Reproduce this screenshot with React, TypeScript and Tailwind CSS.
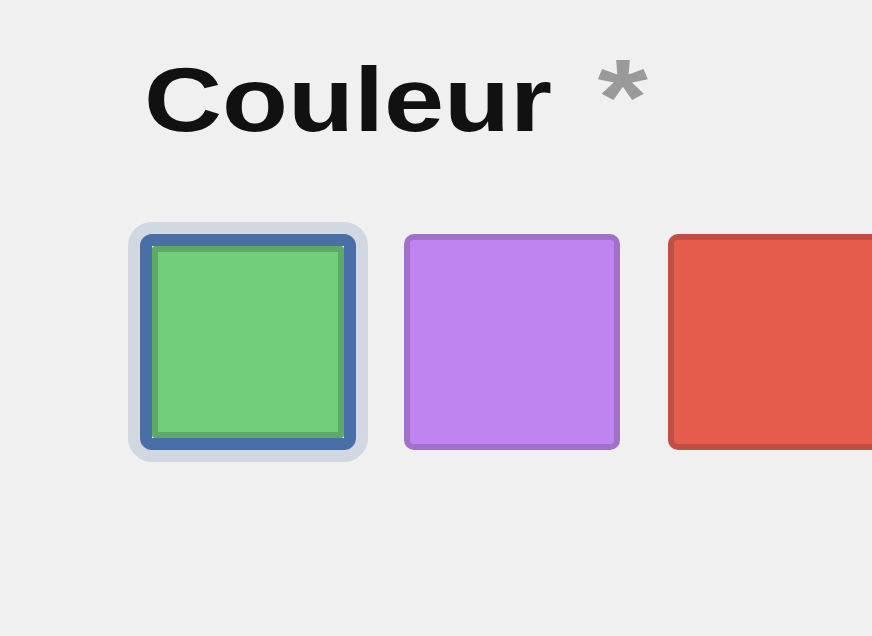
import React, { useState } from 'react';

type Swatch = { id: string; fill: string; edge: string };

const SWATCHES: Swatch[] = [
  { id: 'vert', fill: 'bg-[#72ce7a]', edge: 'border-[#5caa66]' },
  { id: 'violet', fill: 'bg-[#c084f0]', edge: 'border-[#a170c8]' },
  { id: 'rouge', fill: 'bg-[#e55c4d]', edge: 'border-[#c04f43]' },
];

const App: React.FC = () => {
  const [selected, setSelected] = useState('vert');

  return (
    <div className="min-h-screen w-full overflow-hidden bg-[#f0f0f0] pt-[55px] font-['Liberation_Sans',Arial,sans-serif]">
      <h1 className="ml-[144px] inline-flex items-start origin-left scale-x-[1.2] text-[90px] font-bold leading-none text-[#111111]">
        <span>Couleur</span>
        <span className="ml-[38px] text-[108px] leading-[84px] text-[#9a9a9a]">*</span>
      </h1>

      <div className="mt-[89px] ml-[140px] flex gap-12">
        {SWATCHES.map(s =>
          s.id === selected ? (
            <button
              key={s.id}
              onClick={() => setSelected(s.id)}
              className="shrink-0 rounded-xl border-[12px] border-[#4a6ea6] bg-white shadow-[0_0_0_12px_#d1d8e2]"
            >
              <div className={`h-[192px] w-[192px] rounded-[3px] border-[6px] ${s.edge} ${s.fill}`} />
            </button>
          ) : (
            <button
              key={s.id}
              onClick={() => setSelected(s.id)}
              className={`h-[216px] w-[216px] shrink-0 rounded-[10px] border-[6px] ${s.edge} ${s.fill}`}
            />
          )
        )}
      </div>
    </div>
  );
};

export default App;
